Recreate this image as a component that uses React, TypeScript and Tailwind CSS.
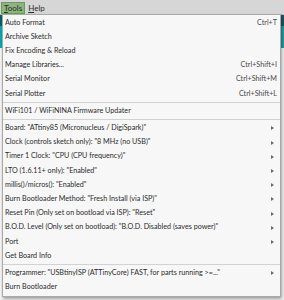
import React from "react";

type Item =
  | { kind: "item"; label: string; shortcut?: string; sub?: boolean }
  | { kind: "sep" };

const items: Item[] = [
  { kind: "item", label: "Auto Format", shortcut: "Ctrl+T" },
  { kind: "item", label: "Archive Sketch" },
  { kind: "item", label: "Fix Encoding & Reload" },
  { kind: "item", label: "Manage Libraries...", shortcut: "Ctrl+Shift+I" },
  { kind: "item", label: "Serial Monitor", shortcut: "Ctrl+Shift+M" },
  { kind: "item", label: "Serial Plotter", shortcut: "Ctrl+Shift+L" },
  { kind: "sep" },
  { kind: "item", label: "WiFi101 / WiFiNINA Firmware Updater" },
  { kind: "sep" },
  { kind: "item", label: 'Board: "ATtiny85 (Micronucleus / DigiSpark)"', sub: true },
  { kind: "item", label: 'Clock (controls sketch only): "8 MHz (no USB)"', sub: true },
  { kind: "item", label: 'Timer 1 Clock: "CPU (CPU frequency)"', sub: true },
  { kind: "item", label: 'LTO (1.6.11+ only): "Enabled"', sub: true },
  { kind: "item", label: 'millis()/micros(): "Enabled"', sub: true },
  { kind: "item", label: 'Burn Bootloader Method: "Fresh Install (via ISP)"', sub: true },
  { kind: "item", label: 'Reset Pin (Only set on bootload via ISP): "Reset"', sub: true },
  { kind: "item", label: 'B.O.D. Level (Only set on bootload): "B.O.D. Disabled (saves power)"', sub: true },
  { kind: "item", label: "Port", sub: true },
  { kind: "item", label: "Get Board Info" },
  { kind: "sep" },
  { kind: "item", label: 'Programmer: "USBtinyISP (ATTinyCore) FAST, for parts running >=..."', sub: true },
  { kind: "item", label: "Burn Bootloader" },
];

export default function App() {
  return (
    <div className="relative w-[284px] h-[300px] overflow-hidden bg-white font-['Lato',_'Open_Sans',_sans-serif] text-[#2b2b2b]">
      {/* menubar */}
      <div className="h-[15px] bg-[#d6d6d6] border-b border-[#b4b4b4] flex items-start pt-[2px] pl-[1px] text-[8px] leading-[12px]">
        <div className="h-[12px] px-[2px] bg-[#8cb57d] border border-[#6e9a60] flex items-center">
          <span><span className="underline">T</span>ools</span>
        </div>
        <div className="h-[12px] px-[3px] flex items-center">
          <span><span className="underline">H</span>elp</span>
        </div>
      </div>
      {/* background window */}
      <div className="h-[11px] bg-[#0f5e60]" />
      <div className="h-[22px] bg-[#17a1a5]" />
      <div className="h-[252px] bg-[#f4f4f4]" />

      {/* dropdown menu */}
      <div className="absolute left-[2px] top-[14px] w-[279px] bg-[#f7f7f7] border border-[#a9a9a9] pt-[1px] pb-[1px] shadow-[1px_2px_3px_rgba(0,0,0,0.35)] text-[7.2px]">
        {items.map((it, i) =>
          it.kind === "sep" ? (
            <div key={i} className="h-[3px] flex items-center">
              <div className="h-[1px] w-full bg-[#d2d2d2]" />
            </div>
          ) : (
            <div key={i} className="h-[14.2px] flex items-center pl-[2px] pr-[3px] whitespace-nowrap">
              <span className="flex-1 overflow-hidden">{it.label}</span>
              {it.shortcut && <span className="text-[#4a4a4a]">{it.shortcut}</span>}
              {it.sub && (
                <span className="mr-[3px] w-0 h-0 border-y-[2px] border-y-transparent border-l-[3px] border-l-[#6a6a6a]" />
              )}
            </div>
          )
        )}
      </div>
    </div>
  );
}
